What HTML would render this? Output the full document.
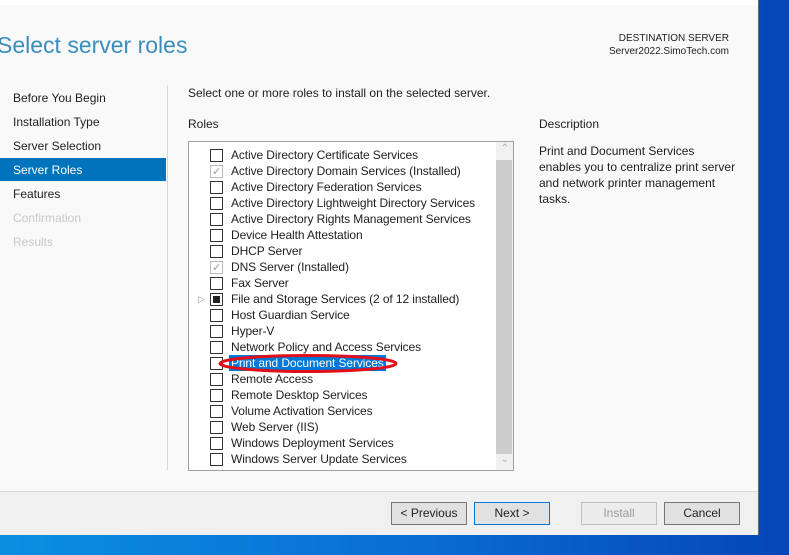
<!DOCTYPE html>
<html><head><style>
body{margin:0;width:789px;height:555px;overflow:hidden;position:relative;font-family:"Liberation Sans",sans-serif;font-size:12px;color:#1e1e1e;background:linear-gradient(90deg,#0a8fe0 0%,#0a6fd6 50%,#0546b8 100%);}
.a{position:absolute;white-space:nowrap}
#win{position:absolute;left:0;top:0;width:758px;height:534px;background:#f9f9f9;border-right:1px solid #5a6a80;border-bottom:1px solid #4a5a70;}
.nav{position:absolute;left:13px}
.row{position:absolute;left:0;height:16px;line-height:16px;letter-spacing:-0.1px}
.cb{position:absolute;left:21px;top:2px;width:11px;height:11px;border:1px solid #333;background:#fff;box-sizing:content-box}
.cb.dis{border-color:#bbb}
.t{position:absolute;left:42px;top:0}
.btn{position:absolute;top:502px;height:21px;width:74px;border:1px solid #777;background:#e1e1e1;text-align:center;line-height:21px;font-size:12px}
</style></head><body>
<div id="win">
<div style="position:absolute;left:0;top:0;width:758px;height:5px;background:#fff"></div>
<div class="a" style="left:-3px;top:32px;font-size:23px;color:#3a8dbd;font-weight:normal">Select server roles</div>
<div class="a" style="right:29px;top:32px;font-size:10px;text-align:right;line-height:13px">DESTINATION SERVER<br>Server2022.SimoTech.com</div>

<div class="a nav" style="top:91px">Before You Begin</div>
<div class="a nav" style="top:115px">Installation Type</div>
<div class="a nav" style="top:139px">Server Selection</div>
<div style="position:absolute;left:0;top:158px;width:166px;height:23px;background:#0073bd"></div>
<div class="a nav" style="top:163px;color:#fff">Server Roles</div>
<div class="a nav" style="top:187px">Features</div>
<div class="a nav" style="top:211px;color:#c8c8c8">Confirmation</div>
<div class="a nav" style="top:235px;color:#c8c8c8">Results</div>
<div style="position:absolute;left:167px;top:85px;width:1px;height:385px;background:#d6d6d6"></div>

<div class="a" style="left:188px;top:86px">Select one or more roles to install on the selected server.</div>
<div class="a" style="left:188px;top:117px">Roles</div>
<div class="a" style="left:539px;top:117px">Description</div>
<div class="a" style="left:539px;top:143px;line-height:16px">Print and Document Services<br>enables you to centralize print server<br>and network printer management<br>tasks.</div>

<div style="position:absolute;left:188px;top:141px;width:324px;height:328px;border:1px solid #a0a0a0;background:#fff">
<div style="position:absolute;right:0;top:0;width:17px;height:328px;background:#f0f0f0"></div>
<div style="position:absolute;right:1px;top:18px;width:16px;height:294px;background:#cdcdcd"></div>
<div class="a" style="right:4px;top:1px;color:#aaa;font-size:10px">&#8963;</div>
<div class="a" style="right:4px;top:312px;color:#aaa;font-size:10px">&#8964;</div>
<div id="rows"></div>
</div>

<div style="position:absolute;left:0;top:491px;width:758px;height:43px;background:#f0f0f0;border-top:1px solid #dadada"></div>
<div class="btn" style="left:391px">&lt; Previous</div>
<div class="btn" style="left:474px;border-color:#0078d7">Next &gt;</div>
<div class="btn" style="left:581px;border-color:#bfbfbf;background:#ececec;color:#9a9a9a">Install</div>
<div class="btn" style="left:664px">Cancel</div>
</div>
<script>
var r=[["Active Directory Certificate Services",0],["Active Directory Domain Services (Installed)",1],["Active Directory Federation Services",0],["Active Directory Lightweight Directory Services",0],["Active Directory Rights Management Services",0],["Device Health Attestation",0],["DHCP Server",0],["DNS Server (Installed)",1],["Fax Server",0],["File and Storage Services (2 of 12 installed)",2],["Host Guardian Service",0],["Hyper-V",0],["Network Policy and Access Services",0],["Print and Document Services",3],["Remote Access",0],["Remote Desktop Services",0],["Volume Activation Services",0],["Web Server (IIS)",0],["Windows Deployment Services",0],["Windows Server Update Services",0]];
var h="";r.forEach(function(x,i){var y=5+i*16;var cb='<div class="cb'+(x[1]==1?' dis':'')+'">'+(x[1]==1?'<span style="position:absolute;left:1px;top:-2px;color:#999;font-size:11px">&#10003;</span>':'')+(x[1]==2?'<div style="position:absolute;left:2px;top:2px;width:7px;height:7px;background:#222"></div>':'')+'</div>';
var t=x[1]==3?'<div class="t" style="background:#0078d7;color:#fff;padding:0 2px;left:40px">'+x[0]+'</div>':'<div class="t">'+x[0]+'</div>';
var ar=x[1]==2?'<span style="position:absolute;left:9px;top:0;color:#999;font-size:9px">&#9655;</span>':'';
h+='<div class="row" style="top:'+y+'px;width:300px">'+ar+cb+t+'</div>';});
document.getElementById("rows").innerHTML=h;
</script>
<svg style="position:absolute;left:218px;top:353px" width="182" height="22"><ellipse cx="90" cy="10.5" rx="88" ry="8" fill="none" stroke="#e0101a" stroke-width="3"/></svg>
</body></html>
